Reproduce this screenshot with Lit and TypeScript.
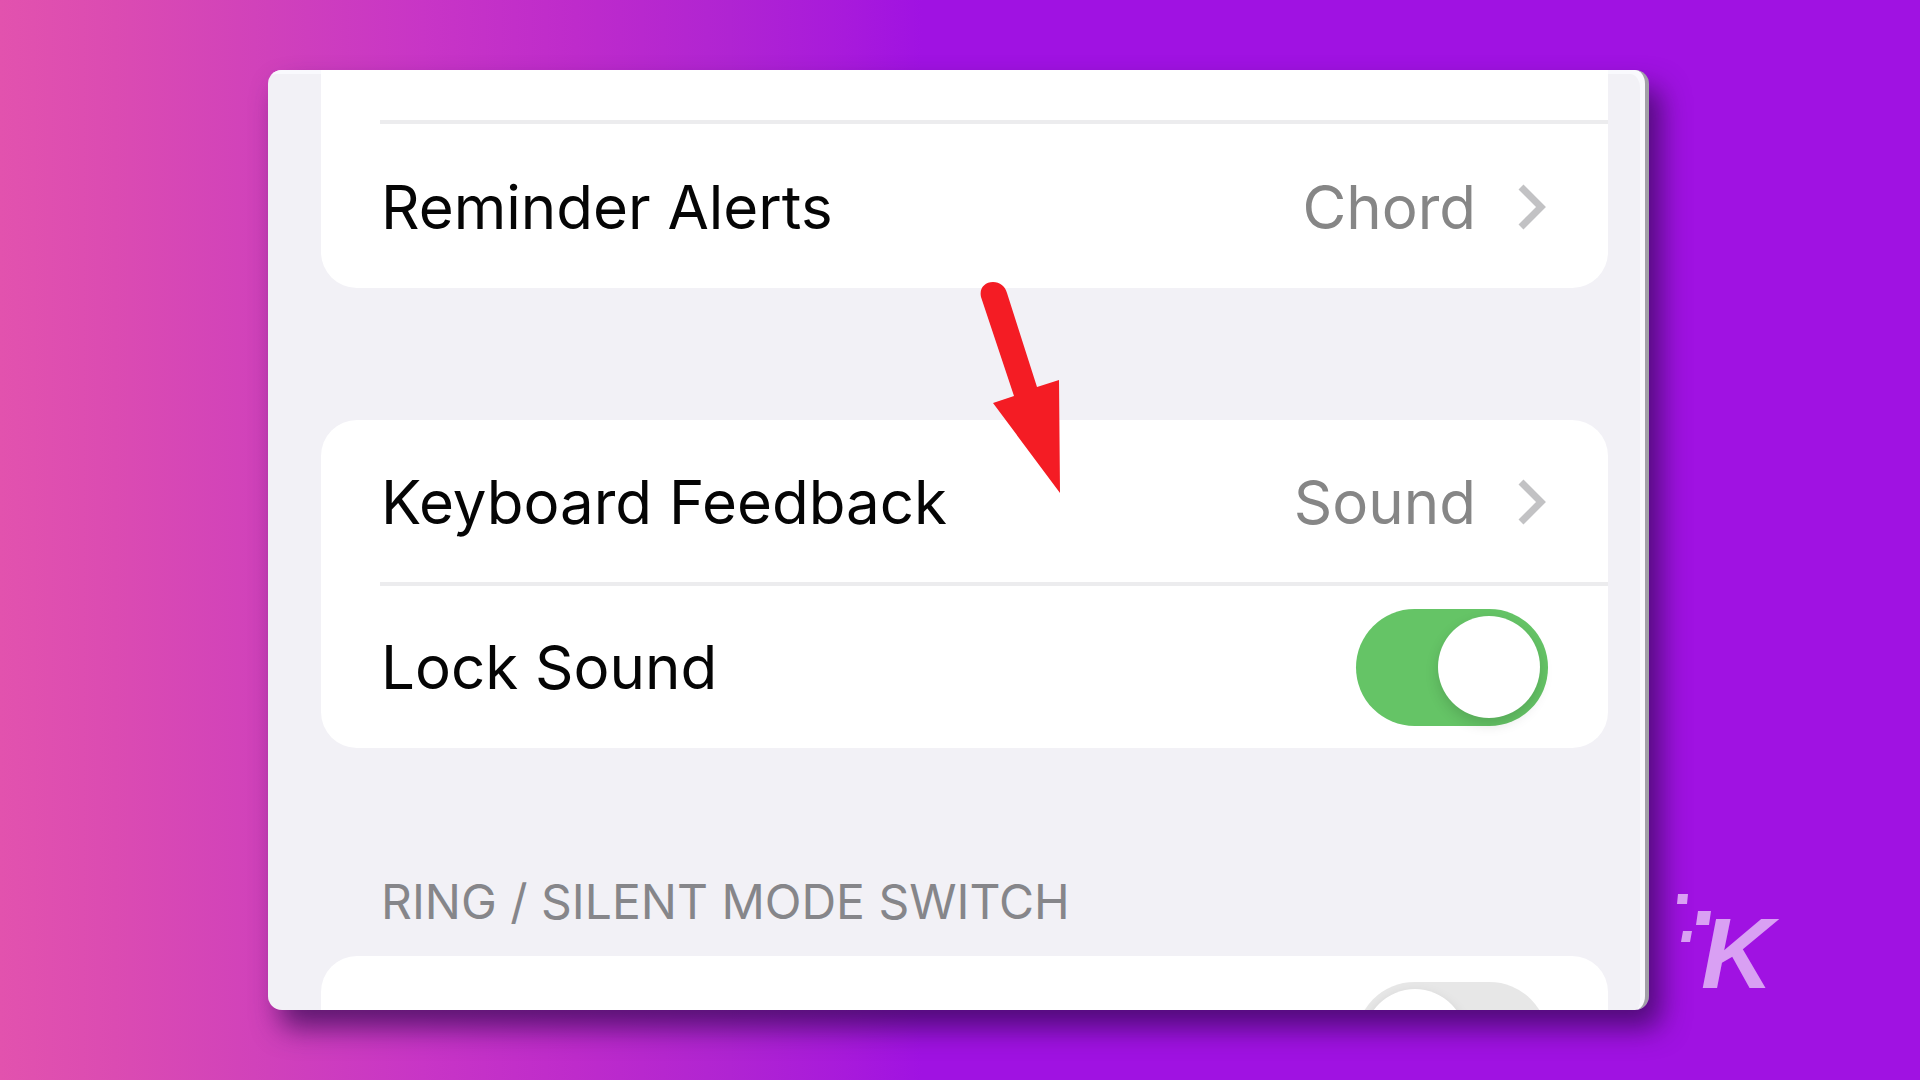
import { LitElement, html, css } from "lit";
import { customElement } from "lit/decorators.js";

const chevron = html`<svg class="chevron" viewBox="0 0 28 46" aria-hidden="true">
  <path d="M1 3 L21 23 L1 43" fill="none" stroke="#c2c2c4" stroke-width="7" />
</svg>`;

const arrow = html`<svg class="arrow" viewBox="0 0 80 212" aria-hidden="true">
  <path
    fill="#f41c24"
    d="M1 16 C-1 7 5 1 13 1 C20 1 25 5 27 12 L57 106 L79 99 L80 212 L13 122 L34 115 Z"
  />
</svg>`;

@customElement("app-root")
export class AppRoot extends LitElement {
  static styles = css`
    :host {
      display: block;
      font-family: Inter, "Liberation Sans", sans-serif;
    }
    .page {
      position: relative;
      box-sizing: border-box;
      height: 100vh;
      padding: 70px 271px 70px 268px;
      display: flex;
      background: linear-gradient(
        90deg,
        #e252ae 0%,
        #db4bb2 6%,
        #d041bb 14%,
        #c835c6 22%,
        #be2bcb 30%,
        #b024d2 38%,
        #a81adb 44%,
        #a012e2 48%,
        #a012e2 100%
      );
    }
    .shade {
      flex: 1;
      min-width: 0;
      display: flex;
      border-radius: 14px;
      box-shadow: 12px 18px 28px rgba(50, 10, 80, 0.72);
    }
    .screen {
      position: relative;
      box-sizing: border-box;
      flex: 1;
      min-width: 0;
      overflow: hidden;
      padding: 0 37px 0 53px;
      border-radius: 14px;
      border-right: 4px solid #a2a0a8;
      background: #f2f1f6;
      box-shadow: inset -5px 4px #f9f9fd;
    }
    .card {
      overflow: hidden;
      border-radius: 36px;
      background: #fff;
    }
    .card.cut {
      border-top-left-radius: 0;
      border-top-right-radius: 0;
    }
    .stub {
      height: 50px;
    }
    .row {
      box-sizing: border-box;
      width: 100%;
      height: 162px;
      padding: 0 60px;
      border: 0;
      background: none;
      display: flex;
      align-items: center;
      gap: 44px;
      font: inherit;
      font-size: 60px;
      line-height: 76px;
      text-align: left;
      color: #050505;
    }
    .row.link {
      padding-top: 2px;
    }
    .row.tall {
      height: 168px;
    }
    .cut .row {
      height: 164px;
    }
    .label {
      flex: 1;
    }
    .value {
      color: #868686;
    }
    .chevron {
      width: 28px;
      height: 46px;
      overflow: visible;
    }
    .line {
      height: 4px;
      margin: 0 0 0 59px;
      border: 0;
      background: #ececee;
    }
    .gap {
      height: 132px;
    }
    .heading {
      margin: 0;
      padding: 124px 60px 24px;
      font-size: 48px;
      line-height: 60px;
      font-weight: 400;
      color: #86868a;
    }
    .switch {
      appearance: none;
      display: flex;
      align-items: center;
      box-sizing: border-box;
      width: 192px;
      height: 117px;
      margin: 0;
      padding: 0 8px;
      border-radius: 59px;
      background: #e7e7e7;
    }
    .switch::before {
      content: "";
      width: 102px;
      height: 102px;
      border-radius: 50%;
      background: #fff;
      box-shadow: 0 6px 14px rgba(0, 0, 0, 0.14);
    }
    .switch:checked {
      justify-content: flex-end;
      background: #65c466;
    }
    .arrow {
      position: absolute;
      left: 712px;
      top: 211px;
      width: 80px;
      height: 212px;
    }
    .brand {
      position: absolute;
      right: 124px;
      bottom: 58px;
      width: 120px;
      height: 130px;
      overflow: visible;
    }
    .letter {
      font: italic 700 100px "Liberation Sans", sans-serif;
    }
  `;

  render() {
    return html`<main class="page">
      <div class="shade">
        <div class="screen">
          <section class="card cut">
            <div class="stub"></div>
            <hr class="line" />
            <button class="row link">
              <span class="label">Reminder Alerts</span>
              <span class="value">Chord</span>${chevron}
            </button>
          </section>
          <div class="gap"></div>
          <section class="card">
            <button class="row link">
              <span class="label">Keyboard Feedback</span>
              <span class="value">Sound</span>${chevron}
            </button>
            <hr class="line" />
            <label class="row">
              <span class="label">Lock Sound</span>
              <input class="switch" type="checkbox" role="switch" checked />
            </label>
          </section>
          <h2 class="heading" id="ring">RING / SILENT MODE SWITCH</h2>
          <section class="card">
            <div class="row tall">
              <span class="label"></span>
              <input class="switch" type="checkbox" role="switch" aria-labelledby="ring" />
            </div>
          </section>
          ${arrow}
        </div>
      </div>
      <svg class="brand" viewBox="0 0 120 130" role="img" aria-label="K">
        <g fill="#d9a0f3">
          <path d="M2 2h10l-1 10H1z M22 19h13l-2 14H20z M7 39h9l-2 11H5z" />
          <text class="letter" x="25" y="96">K</text>
        </g>
      </svg>
    </main>`;
  }
}
